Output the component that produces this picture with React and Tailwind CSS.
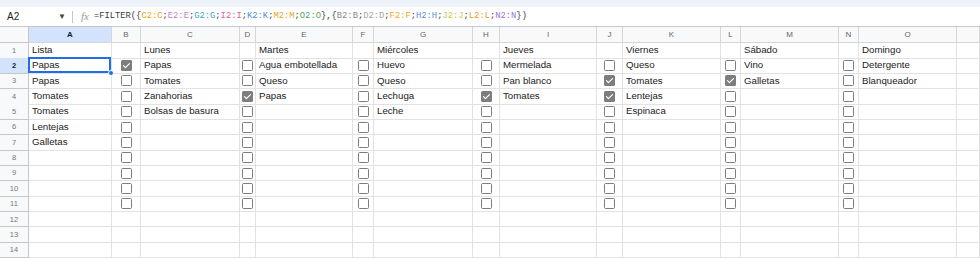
import React from "react";

const cols = "grid-cols-[29px_83px_29px_99px_16px_97px_21px_99px_27px_97px_26px_98px_20px_98px_20px_98px_1fr]";
const letters = ["A", "B", "C", "D", "E", "F", "G", "H", "I", "J", "K", "L", "M", "N", "O", ""];

// text columns by index (0 = A)
const textCols = {
    0: ["Lista", "Papas", "Papas", "Tomates", "Tomates", "Lentejas", "Galletas"],
    2: ["Lunes", "Papas", "Tomates", "Zanahorias", "Bolsas de basura"],
    4: ["Martes", "Agua embotellada", "Queso", "Papas"],
    6: ["Miércoles", "Huevo", "Queso", "Lechuga", "Leche"],
    8: ["Jueves", "Mermelada", "Pan blanco", "Tomates"],
    10: ["Viernes", "Queso", "Tomates", "Lentejas", "Espinaca"],
    12: ["Sábado", "Vino", "Galletas"],
    14: ["Domingo", "Detergente", "Blanqueador"],
};

// checked rows per checkbox column
const checked = {
    1: [2],
    3: [4],
    5: [],
    7: [4],
    9: [3, 4],
    11: [3],
    13: [],
};

const formula = [
    ["=FILTER({", "#3c4043"],
    ["C2:C", "#f2a60c"], [";", "#3c4043"],
    ["E2:E", "#c97fd6"], [";", "#3c4043"],
    ["G2:G", "#3aa4cf"], [";", "#3c4043"],
    ["I2:I", "#d9609e"], [";", "#3c4043"],
    ["K2:K", "#4b8ee0"], [";", "#3c4043"],
    ["M2:M", "#eba417"], [";", "#3c4043"],
    ["O2:O", "#4fa55a"], ["},{", "#3c4043"],
    ["B2:B", "#8a8a8a"], [";", "#3c4043"],
    ["D2:D", "#a5a5a5"], [";", "#3c4043"],
    ["F2:F", "#f0a81a"], [";", "#3c4043"],
    ["H2:H", "#5c8ed8"], [";", "#3c4043"],
    ["J2:J", "#c9c93c"], [";", "#3c4043"],
    ["L2:L", "#ef9a2a"], [";", "#3c4043"],
    ["N2:N", "#9c72d6"], ["})", "#3c4043"],
];

function Checkbox({ on }) {
    if (on) {
        return (
            <div className="w-[11px] h-[11px] rounded-[1.5px] bg-[#7d7d7d] flex items-center justify-center">
                <svg width="9" height="9" viewBox="0 0 24 24" fill="none" stroke="white" strokeWidth={3.2} strokeLinecap="round" strokeLinejoin="round">
                    <path d="M4 12.5l5 5L20 7" />
                </svg>
            </div>
        );
    }
    return <div className="w-[11px] h-[11px] rounded-[1.5px] border-[1.5px] border-[#7d7d7d]"></div>;
}

function Cell({ col, row }) {
    const base = "h-full border-r border-b border-[#e2e2e2] overflow-visible whitespace-nowrap";
    if (textCols[col] !== undefined) {
        const txt = textCols[col][row - 1];
        const selected = col === 0 && row === 2;
        return (
            <div className={`${base} relative flex items-center pl-[3px] text-[9.7px] text-[#222]`}>
                <span className="relative z-10">{txt}</span>
                {selected && (
                    <>
                        <div className="absolute -left-[1px] -top-[1px] right-0 bottom-0 border-2 border-[#1f6fe5] z-20"></div>
                        <div className="absolute -right-[3px] -bottom-[3px] w-[6px] h-[6px] rounded-full bg-[#1f6fe5] border border-white z-30"></div>
                    </>
                )}
            </div>
        );
    }
    if (checked[col] !== undefined && row >= 2 && row <= 11) {
        return (
            <div className={`${base} flex items-center justify-center`}>
                <Checkbox on={checked[col].includes(row)} />
            </div>
        );
    }
    return <div className={base}></div>;
}

export default function App() {
    const rows = Array.from({ length: 14 }, (_, i) => i + 1);
    return (
        <div className="w-[980px] h-[258px] overflow-hidden bg-white" style={{ fontFamily: '"Liberation Sans", Arial, sans-serif' }}>
            <div className="h-[7px] bg-[#eef2f9]"></div>
            <div className="h-[20px] flex items-center border-b border-[#c7c7c7] bg-white">
                <div className="w-[58px] pl-[7px] text-[10px] text-[#1f1f1f]">A2</div>
                <div className="text-[8px] text-[#444]">▼</div>
                <div className="w-[1px] h-[12px] bg-[#c7c7c7] ml-[6px]"></div>
                <div className="ml-[8px] text-[11px] italic text-[#9a9a9a]" style={{ fontFamily: '"Liberation Serif", serif' }}>fx</div>
                <div className="ml-[5px] text-[8.8px] whitespace-nowrap" style={{ fontFamily: '"Liberation Mono", monospace' }}>
                    {formula.map(([t, c], i) => (
                        <span key={i} style={{ color: c }}>{t}</span>
                    ))}
                </div>
            </div>
            <div className={`grid ${cols} h-[16px]`}>
                <div className="bg-[#f8f9fa] border-r border-b border-[#c7c7c7]"></div>
                {letters.map((l, i) => (
                    <div
                        key={i}
                        className={`flex items-center justify-center text-[8px] border-r border-b border-[#d6d6d6] ${
                            i === 0 ? "bg-[#d3e3fd] font-bold text-[#0b1f3a]" : "bg-[#f8f9fa] text-[#666]"
                        }`}
                    >
                        {l}
                    </div>
                ))}
            </div>
            {rows.map((r) => (
                <div key={r} className={`grid ${cols} h-[15.36px]`}>
                    <div
                        className={`flex items-center justify-center text-[7.5px] border-r border-b border-[#c7c7c7] ${
                            r === 2 ? "bg-[#d3e3fd] font-bold text-[#0b1f3a]" : "bg-[#f8f9fa] text-[#777]"
                        }`}
                    >
                        {r}
                    </div>
                    {letters.map((_, c) => (
                        <Cell key={c} col={c} row={r} />
                    ))}
                </div>
            ))}
        </div>
    );
}
